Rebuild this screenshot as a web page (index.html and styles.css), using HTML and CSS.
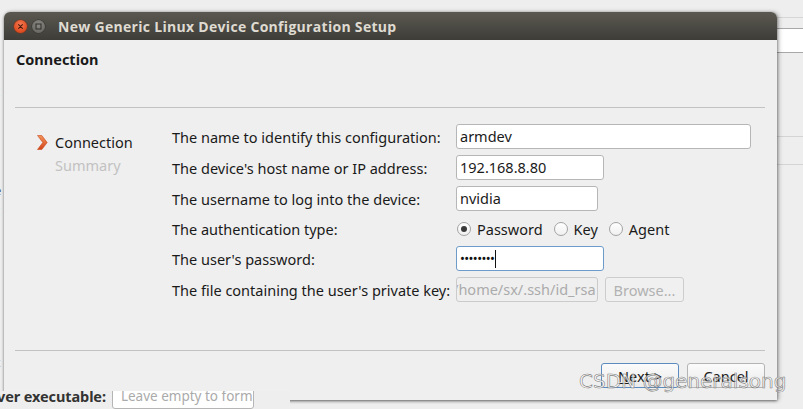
FILE: index.html
```html
<!DOCTYPE html>
<html>
<head>
<meta charset="utf-8">
<link rel="stylesheet" href="styles.css">
</head>
<body>
<div class="desktop">
  <div class="bg-right">
    <div class="bg-band"></div>
    <div class="bg-line l1"></div>
    <div class="bg-line l2"></div>
  </div>
  <div class="bg-left">
    <span class="frag f1">c</span>
    <span class="frag f2">e</span>
    <span class="frag f3">c</span>
    <span class="frag f4">r</span>
    <span class="frag f5">r</span>
    <span class="frag f6">r</span>
    <span class="frag f7 blue">r</span>
    <span class="frag f8 grey">k</span>
  </div>
</div>

<div class="window">
  <div class="titlebar">
    <span class="tb-btn close"><svg width="13" height="13" viewBox="0 0 13 13"><path d="M4.6 4.6 L8.4 8.4 M8.4 4.6 L4.6 8.4" stroke="#4a1a0c" stroke-width="1.1" stroke-linecap="round"/></svg></span>
    <span class="tb-btn mini"><svg width="13" height="13" viewBox="0 0 13 13"><rect x="4" y="4" width="5" height="5" fill="none" stroke="#2e2d2a" stroke-width="1"/></svg></span>
    <span class="tb-title">New Generic Linux Device Configuration Setup</span>
  </div>
  <div class="content">
    <div class="page-title">Connection</div>
    <div class="sep top-sep"></div>
    <div class="main">
      <div class="sidebar">
        <div class="step active">
          <svg class="chev" width="11" height="15" viewBox="0 0 11 15"><defs><linearGradient id="cg" x1="0" y1="0" x2="0" y2="1"><stop offset="0" stop-color="#f3935a"/><stop offset="1" stop-color="#d2461a"/></linearGradient></defs><path d="M0.5 0.5 L4.8 0.5 L10.2 7.5 L4.8 14.5 L0.5 14.5 L5.8 7.5 Z" fill="url(#cg)" stroke="#c9461c" stroke-width="0.6" stroke-linejoin="round"/></svg>
          <span>Connection</span>
        </div>
        <div class="step muted"><span>Summary</span></div>
      </div>
      <div class="form">
        <div class="label">The name to identify this configuration:</div>
        <div class="field"><div class="input wide">armdev</div></div>
        <div class="label">The device's host name or IP address:</div>
        <div class="field"><div class="input w148">192.168.8.80</div></div>
        <div class="label">The username to log into the device:</div>
        <div class="field"><div class="input w142">nvidia</div></div>
        <div class="label radio-label">The authentication type:</div>
        <div class="field radios">
          <span class="radio checked"></span><span class="rtext">Password</span>
          <span class="radio"></span><span class="rtext">Key</span>
          <span class="radio"></span><span class="rtext">Agent</span>
        </div>
        <div class="label">The user's password:</div>
        <div class="field"><div class="input w148 focus"><span class="dots">••••••••</span><span class="caret"></span></div></div>
        <div class="label">The file containing the user's private key:</div>
        <div class="field">
          <div class="input w142 disabled"><span class="clip">/home/sx/.ssh/id_rsa</span></div>
          <div class="btn disabled browse">Browse...</div>
        </div>
      </div>
    </div>
    <div class="sep bottom-sep"></div>
    <div class="footer">
      <div class="btn focus-btn"><span class="u">N</span>ext &gt;</div>
      <div class="btn">Cancel</div>
    </div>
  </div>
</div>

<div class="bg-bottom">
  <div class="bg-row">
    <span class="bg-label">ver executable:</span>
    <span class="bg-input">Leave empty to form</span>
  </div>
</div>
<div class="watermark">CSDN @generalsong</div>
</body>
</html>
```

FILE: styles.css
```css
html, body {
  margin: 0;
  padding: 0;
}
body {
  width: 803px;
  height: 409px;
  overflow: hidden;
  position: relative;
  background: #eeeeee;
  font-family: "Noto Sans", "Open Sans", sans-serif;
  font-size: 14.5px;
  color: #1a1a1a;
}
.desktop {
  position: absolute;
  inset: 0;
}
.bg-right {
  position: absolute;
  left: 777px;
  top: 0;
  width: 26px;
  height: 409px;
}
.bg-band {
  position: absolute;
  left: 0;
  right: 0;
  top: 17px;
  height: 35px;
  border-top: 1px solid #d6d6d6;
  background: linear-gradient(#eeeeee 0, #eeeeee 10px, #a8a8a8 10px, #a8a8a8 11px, #ffffff 11px, #ffffff 34px, #a8a8a8 34px);
}
.bg-line {
  position: absolute;
  left: 0;
  right: 0;
  height: 1px;
  background: #d4d4d4;
}
.bg-line.l1 { top: 136px; }
.bg-line.l2 { top: 164px; }
.bg-left {
  position: absolute;
  left: 0;
  top: 0;
  width: 4px;
  height: 409px;
  overflow: hidden;
}
.frag {
  position: absolute;
  left: -6px;
  font-size: 13px;
  color: #555;
  line-height: 14px;
}
.frag.blue { color: #2a8fd0; }
.frag.grey { color: #bbb; }
.f1 { top: 84px; }
.f2 { top: 183px; }
.f3 { top: 203px; }
.f4 { top: 235px; }
.f5 { top: 266px; }
.f6 { top: 296px; }
.f7 { top: 328px; }
.f8 { top: 355px; }

/* strip of the main window that is drawn over the dialog's lower edge */
.bg-bottom {
  position: absolute;
  left: 0;
  top: 391px;
  width: 290px;
  height: 18px;
  background: #eeeeee;
  overflow: hidden;
}
.bg-row {
  display: flex;
  align-items: center;
  gap: 6px;
  margin-top: -9px;
  height: 27px;
}
.bg-label {
  font-size: 14.5px;
  line-height: 20px;
  font-weight: bold;
  color: #333;
  margin-left: -3px;
  letter-spacing: -0.1px;
}
.bg-input {
  display: block;
  box-sizing: border-box;
  height: 26px;
  width: 142px;
  border: 1px solid #b5b5b5;
  border-radius: 3px;
  background: #fff;
  color: #aaa;
  padding-left: 8px;
  font-size: 13.5px;
  line-height: 24px;
  white-space: nowrap;
  overflow: hidden;
}

.window {
  position: absolute;
  left: 4px;
  top: 12px;
  width: 773px;
  height: 388px;
  background: #efefef;
  border-radius: 6px 6px 0 0;
  box-shadow: 0 1px 3px rgba(0, 0, 0, 0.5), 2px 0 4px rgba(0, 0, 0, 0.25);
  overflow: hidden;
}
.titlebar {
  height: 28px;
  background: linear-gradient(#5a5850, #3e3d38);
  display: flex;
  align-items: center;
  padding-left: 10px;
  gap: 5px;
}
.tb-btn {
  width: 13px;
  height: 13px;
  border-radius: 50%;
  display: block;
  line-height: 0;
}
.tb-btn.close {
  background: radial-gradient(circle at 50% 35%, #f47b55, #de4a1f 70%);
  box-shadow: 0 0 0 0.5px #8a3417;
}
.tb-btn.mini {
  background: radial-gradient(circle at 50% 35%, #8c8a84, #6d6b65 70%);
  box-shadow: 0 0 0 0.5px #33322e;
}
.tb-title {
  margin-left: 8px;
  color: #dfdbd2;
  font-family: "Open Sans", "Noto Sans", sans-serif;
  font-weight: bold;
  font-size: 14px;
  letter-spacing: 0.3px;
}
.content {
  padding: 0 12px 0 11px;
}
.page-title {
  padding-top: 10px;
  padding-left: 1px;
  font-weight: bold;
  line-height: 18px;
  height: 18px;
}
.sep {
  height: 1px;
  background: #c2c2c2;
}
.top-sep {
  margin-top: 39px;
}
.main {
  display: flex;
  height: 242px;
}
.sidebar {
  width: 157px;
  padding-top: 24px;
  padding-left: 22px;
  box-sizing: border-box;
}
.step {
  display: flex;
  align-items: center;
  height: 20px;
  margin-bottom: 3px;
}
.step .chev {
  margin-right: 7px;
}
.step.muted span {
  color: #c2c2c2;
  margin-left: 18px;
}
.form {
  display: grid;
  grid-template-columns: 284px auto;
  grid-template-rows: 25px 25px 25px 23px 25px 25px;
  row-gap: 6px;
  padding-top: 16px;
  align-items: center;
}
.label {
  white-space: nowrap;
  line-height: 18px;
}
.field {
  display: flex;
  align-items: center;
  height: 25px;
}
.radios {
  height: 23px;
}
.input {
  box-sizing: border-box;
  height: 25px;
  background: #fff;
  border: 1px solid #b6b6b6;
  border-radius: 3px;
  padding-left: 3px;
  line-height: 23px;
  white-space: nowrap;
  overflow: hidden;
  display: flex;
  align-items: center;
}
.input.wide { width: 295px; }
.input.w148 { width: 148px; }
.input.w142 { width: 142px; }
.input.focus {
  border-color: #6e9cca;
}
.dots {
  font-size: 13px;
  letter-spacing: -0.6px;
  color: #111;
}
.caret {
  display: inline-block;
  width: 1px;
  height: 18px;
  background: #111;
  margin-left: 1px;
}
.input.disabled {
  background: #efefef;
  border-color: #cbcbcb;
  color: #ababab;
  padding-left: 0;
}
.clip {
  margin-left: -4px;
}
.radio {
  box-sizing: border-box;
  width: 14px;
  height: 14px;
  border-radius: 50%;
  border: 1px solid #a3a3a3;
  background: linear-gradient(#ffffff, #f0f0f0);
  position: relative;
  margin-left: 1px;
  margin-right: 6px;
}
.radio.checked::after {
  content: "";
  position: absolute;
  left: 3px;
  top: 3px;
  width: 6px;
  height: 6px;
  border-radius: 50%;
  background: #3a3a3a;
}
.rtext {
  margin-right: 10px;
}
.btn {
  box-sizing: border-box;
  height: 25px;
  width: 78px;
  border: 1px solid #b4b4b4;
  border-radius: 3px;
  background: linear-gradient(#fbfbfb, #eaeaea);
  display: flex;
  align-items: center;
  justify-content: center;
}
.btn.disabled {
  background: #f0f0f0;
  border-color: #cdcdcd;
  color: #b2b2b2;
}
.browse {
  margin-left: 7px;
  width: 79px;
}
.footer {
  display: flex;
  justify-content: flex-end;
  gap: 8px;
  padding-top: 12px;
}
.focus-btn {
  border-color: #5c8bbf;
}
.u {
  text-decoration: underline;
}
.watermark {
  position: absolute;
  left: 579px;
  top: 369px;
  font-family: "DejaVu Sans", sans-serif;
  font-size: 20px;
  letter-spacing: 0;
  color: rgba(255, 255, 255, 0.7);
  -webkit-text-stroke: 0.6px rgba(110, 110, 110, 0.9);
  white-space: nowrap;
}
```
